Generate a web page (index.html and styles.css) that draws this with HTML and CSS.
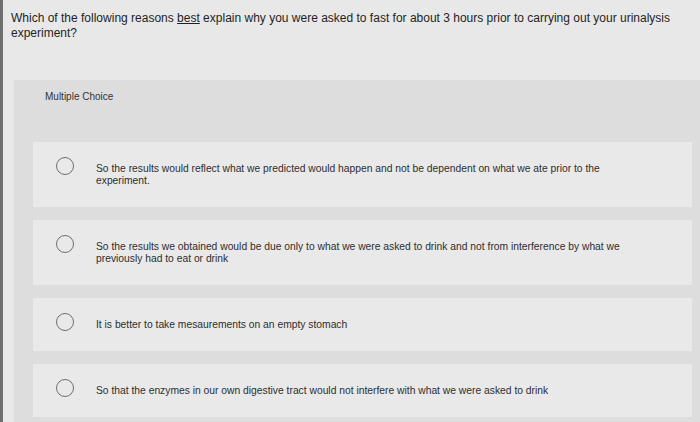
FILE: index.html
```html
<!DOCTYPE html>
<html>
<head>
<meta charset="utf-8">
<link rel="stylesheet" href="styles.css">
</head>
<body>
<div class="frame">
  <p class="question">Which of the following reasons <span class="ul">best</span> explain why you were asked to fast for about 3 hours prior to carrying out your urinalysis experiment?</p>
  <section class="panel">
    <div class="label">Multiple Choice</div>
    <div class="options">
      <div class="option"><span class="radio"></span><span class="text">So the results would reflect what we predicted would happen and not be dependent on what we ate prior to the experiment.</span></div>
      <div class="option"><span class="radio"></span><span class="text">So the results we obtained would be due only to what we were asked to drink and not from interference by what we previously had to eat or drink</span></div>
      <div class="option"><span class="radio"></span><span class="text">It is better to take mesaurements on an empty stomach</span></div>
      <div class="option"><span class="radio"></span><span class="text">So that the enzymes in our own digestive tract would not interfere with what we were asked to drink</span></div>
    </div>
  </section>
</div>
</body>
</html>
```

FILE: styles.css
```css
html, body {
  margin: 0;
  padding: 0;
}
body {
  background: #e6e6e6;
  font-family: "Liberation Sans", Arial, sans-serif;
  overflow: hidden;
}
.frame {
  height: 422px;
  overflow: hidden;
  border-left: 3px solid #6e6e6e;
  background: #e8e8e8;
}
.question {
  margin: 0;
  padding: 11px 20px 0 8px;
  font-size: 12px;
  line-height: 15px;
  color: #1f1f1f;
}
.ul {
  text-decoration: underline;
  text-decoration-thickness: 1px;
  text-underline-offset: 1px;
}
.panel {
  margin: 39px 0 0 11px;
  background: #dddddd;
  height: 342px;
  box-sizing: border-box;
  padding: 11px 0 0 0;
}
.label {
  padding-left: 31px;
  font-size: 10px;
  line-height: 12px;
  color: #333;
}
.options {
  margin-top: 39px;
  display: flex;
  flex-direction: column;
  gap: 13px;
  padding-left: 19px;
  padding-right: 8px;
}
.option {
  background: #e9e9e9;
  display: flex;
  align-items: flex-start;
  padding: 15px 0 20px 23px;
}
.radio {
  flex: none;
  width: 18px;
  height: 18px;
  box-sizing: border-box;
  border: 1.3px solid #6f6f6f;
  border-radius: 50%;
  margin-right: 22px;
}
.text {
  padding-top: 6px;
  max-width: 540px;
  font-size: 10.3px;
  line-height: 12px;
  color: #2e2e2e;
}
```
